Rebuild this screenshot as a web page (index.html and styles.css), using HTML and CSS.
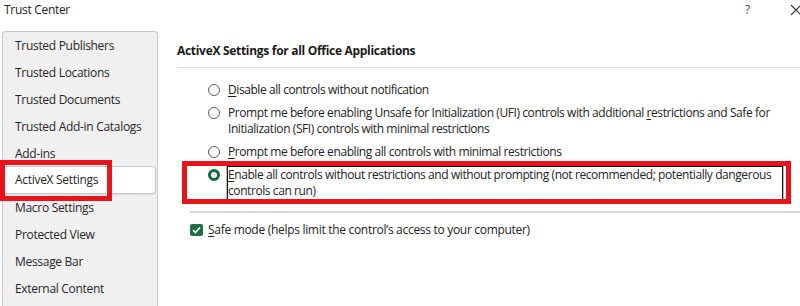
FILE: index.html
```html
<!DOCTYPE html>
<html lang="en">
<head>
    <meta charset="UTF-8">
    <title>Trust Center</title>
    <link rel="stylesheet" href="styles.css">
</head>
<body>

    <div class="titlebar">
        <span class="title">Trust Center</span>
        <span class="help">?</span>
        <span class="close">
            <svg width="12" height="12" viewBox="0 0 12 12"><path d="M1 1 L11 11 M11 1 L1 11" stroke="#333" stroke-width="1.1" fill="none"/></svg>
        </span>
    </div>

    <div class="dialog">
        <!-- Left navigation -->
        <div class="sidebar">
            <div class="nav-item">Trusted Publishers</div>
            <div class="nav-item">Trusted Locations</div>
            <div class="nav-item">Trusted Documents</div>
            <div class="nav-item">Trusted Add-in Catalogs</div>
            <div class="nav-item">Add-ins</div>
            <div class="nav-item selected">ActiveX Settings</div>
            <div class="nav-item">Macro Settings</div>
            <div class="nav-item">Protected View</div>
            <div class="nav-item">Message Bar</div>
            <div class="nav-item">External Content</div>
            <div class="mark mark-nav"></div>
        </div>

        <!-- Settings page -->
        <div class="main">
            <div class="heading">ActiveX Settings for all Office Applications</div>

            <div class="options">
                <div class="option">
                    <span class="radio"></span>
                    <span class="label"><u>D</u>isable all controls without notification</span>
                </div>
                <div class="option">
                    <span class="radio"></span>
                    <span class="label">Prompt me before enabling Unsafe for Initialization (UFI) controls with additional <u>r</u>estrictions and Safe for Initialization (SFI) controls with minimal restrictions</span>
                </div>
                <div class="option">
                    <span class="radio"></span>
                    <span class="label"><u>P</u>rompt me before enabling all controls with minimal restrictions</span>
                </div>
                <div class="option">
                    <span class="radio checked"></span>
                    <span class="label focused"><u>E</u>nable all controls without restrictions and without prompting (not recommended; potentially dangerous controls can run)</span>
                    <div class="mark mark-option"></div>
                </div>
            </div>

            <div class="safe">
                <span class="checkbox">
                    <svg width="9" height="8" viewBox="0 0 9 8"><path d="M1 4.2 L3.4 6.5 L8 1.5" stroke="#fff" stroke-width="1.6" fill="none"/></svg>
                </span>
                <span class="label"><u>S</u>afe mode (helps limit the control’s access to your computer)</span>
            </div>
        </div>
    </div>

</body>
</html>
```

FILE: styles.css
```css
body {
    margin: 0;
    background-color: #fff;
    font-family: "Open Sans", "Noto Sans", sans-serif;
    font-size: 12px;
    letter-spacing: -0.3px;
    color: #222;
    width: 800px;
    height: 306px;
    overflow: hidden;
}

.titlebar {
    height: 31px;
    position: relative;
}

.title {
    position: absolute;
    left: 4px;
    top: 1px;
    line-height: 18px;
}

.help {
    position: absolute;
    left: 745px;
    top: 1px;
    line-height: 18px;
    color: #444;
}

.close {
    position: absolute;
    left: 790px;
    top: 3px;
}

.dialog {
    display: flex;
    height: 275px;
}

.sidebar {
    position: relative;
    width: 154px;
    margin-left: 2px;
    background-color: #f0f0f0;
    border: 1px solid #c9c9c9;
    border-bottom: none;
    border-radius: 4px 4px 0 0;
}

.nav-item {
    height: 27px;
    line-height: 27px;
    padding-left: 12px;
    color: #262626;
}

.nav-item.selected {
    background-color: #fff;
    border: 1px solid #c6c6c6;
    border-left: none;
    border-radius: 0 4px 4px 0;
    height: 26px;
    line-height: 26px;
    margin-right: 1px;
    margin-top: -1px;
    box-shadow: 0 1px 1px rgba(0, 0, 0, 0.08);
}

.mark {
    position: absolute;
    border: 5px solid #e8141c;
}

.mark-nav {
    left: -3px;
    top: 128px;
    width: 102px;
    height: 31px;
}

.main {
    flex: 1;
    margin-left: 19px;
}

.heading {
    font-weight: bold;
    font-size: 12px;
    color: #1a1a1a;
    padding-top: 12px;
    height: 24px;
    line-height: 16px;
    border-bottom: 1px solid #dedede;
}

.options {
    margin-top: 14px;
    padding-left: 31px;
    padding-right: 18px;
    letter-spacing: -0.42px;
}

.option {
    position: relative;
    display: flex;
    align-items: flex-start;
    line-height: 16px;
    margin-bottom: 7px;
}

.radio {
    flex: none;
    width: 10px;
    height: 10px;
    border: 1px solid #5c5c5c;
    border-radius: 50%;
    margin-top: 2px;
    margin-right: 8px;
}

.radio.checked {
    width: 6px;
    height: 6px;
    border: 3px solid #0e6b3e;
}

.label u {
    text-decoration-thickness: 1px;
    text-underline-offset: 2px;
}

.label.focused {
    outline: 1px solid #111;
    outline-offset: 0;
    box-shadow: 0 0 0 2px #bbb;
}

.mark-option {
    left: -26px;
    top: -6px;
    right: -9px;
    bottom: -5px;
}

.safe {
    display: flex;
    align-items: center;
    margin-top: 12px;
    margin-left: 13px;
    padding-top: 9px;
    border-top: 2px solid #d4d4d4;
    line-height: 16px;
    letter-spacing: -0.3px;
}

.checkbox {
    flex: none;
    width: 13px;
    height: 12px;
    background-color: #1d7044;
    border-radius: 2px;
    display: flex;
    align-items: center;
    justify-content: center;
    margin-right: 5px;
}
```
